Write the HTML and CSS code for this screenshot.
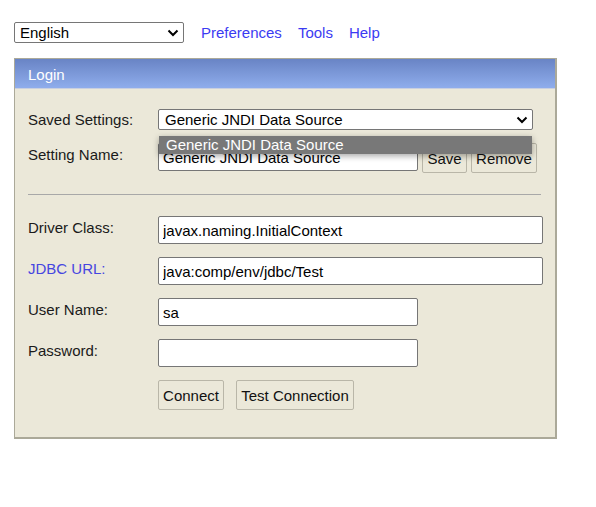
FILE: index.html
```html
<!DOCTYPE html>
<html>
<head>
<meta charset="utf-8">
<link rel="stylesheet" href="styles.css">
</head>
<body>
<div class="topbar">
  <div class="selwrap">
    <select class="lang"><option>English</option></select>
    <svg class="chev" width="12" height="8" viewBox="0 0 12 8"><path d="M1.5 1.5 L6 6 L10.5 1.5" fill="none" stroke="#000" stroke-width="2"/></svg>
  </div>
  <a class="link l1" href="#">Preferences</a>
  <a class="link l2" href="#">Tools</a>
  <a class="link l3" href="#">Help</a>
</div>
<div class="panel">
  <div class="head">Login</div>
  <div class="body">
    <div class="row r-saved">
      <div class="label lab-saved">Saved Settings:</div>
      <div class="ctl">
        <select class="sel-saved"><option>Generic JNDI Data Source</option></select>
        <svg class="chev chev2" width="12" height="8" viewBox="0 0 12 8"><path d="M1.5 1.5 L6 6 L10.5 1.5" fill="none" stroke="#000" stroke-width="2"/></svg>
        <div class="popup">Generic JNDI Data Source</div>
      </div>
    </div>
    <div class="row r-name">
      <div class="label">Setting Name:</div>
      <div class="ctl flex">
        <input class="inp short" type="text" value="Generic JNDI Data Source">
        <button class="btn b-save">Save</button>
        <button class="btn b-remove">Remove</button>
      </div>
    </div>
    <div class="sep"></div>
    <div class="row r-first">
      <div class="label">Driver Class:</div>
      <div class="ctl"><input class="inp long" type="text" value="javax.naming.InitialContext"></div>
    </div>
    <div class="row">
      <div class="label blue">JDBC URL:</div>
      <div class="ctl"><input class="inp long" type="text" value="java:comp/env/jdbc/Test"></div>
    </div>
    <div class="row">
      <div class="label">User Name:</div>
      <div class="ctl"><input class="inp short" type="text" value="sa"></div>
    </div>
    <div class="row">
      <div class="label">Password:</div>
      <div class="ctl"><input class="inp short" type="password" value=""></div>
    </div>
    <div class="row">
      <div class="label"></div>
      <div class="ctl flex gap12">
        <button class="btn b-connect">Connect</button>
        <button class="btn b-test">Test Connection</button>
      </div>
    </div>
  </div>
</div>
</body>
</html>
```
FILE: styles.css
```css
html, body {
  margin: 0;
  padding: 0;
  background: #ffffff;
  font-family: Arial, "Liberation Sans", sans-serif;
  font-size: 15px;
  color: #111;
}
.topbar {
  display: flex;
  align-items: center;
  padding: 22px 0 0 14px;
  height: 21px;
}
.selwrap { position: relative; }
.chev {
  position: absolute;
  right: 5px;
  top: 7px;
  pointer-events: none;
}
.chev2 { right: 5px; top: 7px; }
.lang {
  -webkit-appearance: none;
  appearance: none;
  display: block;
  box-sizing: border-box;
  width: 170px;
  height: 21px;
  font: 15px Arial, "Liberation Sans", sans-serif;
  color: #000;
  background: #fff;
  border: 1px solid #767676;
  border-radius: 2px;
  padding: 0 5px;
  margin: 0;
}
.link {
  color: #3b3bf2;
  text-decoration: none;
  line-height: 17px;
}
.l1 { margin-left: 17px; }
.l2 { margin-left: 16px; }
.l3 { margin-left: 16px; }
.panel {
  margin: 15px 0 0 14px;
  width: 540px;
  background: #ebe8d9;
  border-top: 1px solid #aba999;
  border-left: 1px solid #aba999;
  border-right: 2px solid #aba999;
  border-bottom: 2px solid #aba999;
}
.head {
  background: linear-gradient(#6984c5, #8fadec);
  color: #fff;
  padding: 7px 13px 5px;
  line-height: 17px;
  border-bottom: 1px solid #c9cfdf;
}
.body {
  padding: 20px 13px 27px 13px;
}
.row {
  display: flex;
  align-items: flex-start;
  margin-bottom: 13px;
}
.row:last-child { margin-bottom: 0; }
.r-name { margin-bottom: 0; }
.label {
  width: 130px;
  flex: none;
  padding-top: 3px;
  line-height: 17px;
  color: #1a1a1a;
}
.lab-saved { padding-top: 2px; }
.blue { color: #4646e0; }
.ctl { position: relative; }
.flex { display: flex; align-items: flex-start; }
.gap12 { gap: 12px; }
.sel-saved {
  -webkit-appearance: none;
  appearance: none;
  box-sizing: border-box;
  width: 375px;
  height: 21px;
  font: 15px Arial, "Liberation Sans", sans-serif;
  color: #000;
  background: #fff;
  border: 1px solid #767676;
  border-radius: 2px;
  padding: 0 6px;
  margin: 0;
  display: block;
}
.popup {
  position: absolute;
  left: 1px;
  top: 27px;
  width: 366px;
  height: 18px;
  line-height: 18px;
  padding-left: 7px;
  background: #787878;
  color: #fff;
  box-shadow: 0 2px 6px rgba(0,0,0,0.35);
  z-index: 5;
}
.inp {
  display: block;
  box-sizing: border-box;
  height: 28px;
  margin: 0;
  padding: 0 4px;
  border: 1px solid #767676;
  border-radius: 2px;
  background: #fff;
  font: 15px Arial, "Liberation Sans", sans-serif;
  color: #000;
}
.short { width: 260px; }
.long { width: 385px; }
.btn {
  box-sizing: border-box;
  height: 30px;
  margin: 0;
  padding: 0 4px;
  border: 1px solid #b9b6a8;
  border-radius: 2px;
  background: #ebe8d9;
  font: 15px Arial, "Liberation Sans", sans-serif;
  color: #111;
}
.b-save { margin-left: 4px; width: 45px; }
.b-remove { margin-left: 4px; width: 66px; }
.b-connect { width: 66px; }
.b-test { width: 118px; }
.sep {
  height: 1px;
  background: #a8a8a8;
  margin: 21px 1px 21px 0;
}
```
